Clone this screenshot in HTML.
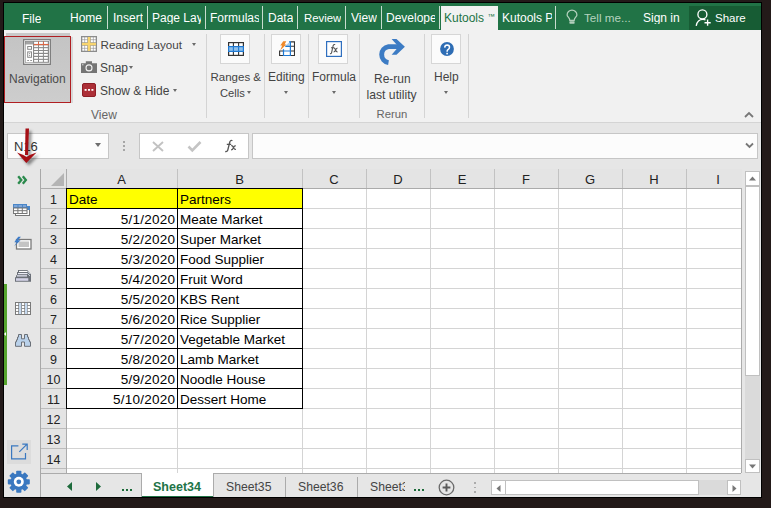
<!DOCTYPE html>
<html><head><meta charset="utf-8">
<style>
*{margin:0;padding:0;box-sizing:border-box}
html,body{width:771px;height:508px;overflow:hidden;background:#231a19}
body{position:relative;font-family:"Liberation Sans",sans-serif}
.a{position:absolute}
.t{position:absolute;white-space:nowrap;line-height:1}
#win{position:absolute;left:3px;top:2px;width:759px;height:496px;background:#000}
#tabs{position:absolute;left:4px;top:3px;width:757px;height:27px;background:#217346}
.tab{position:absolute;top:12px;font-size:12px;color:#fff;white-space:nowrap;line-height:1;overflow:hidden}
.sep{position:absolute;top:6px;width:1px;height:23px;background:#c8dccf}
#ribbon{position:absolute;left:4px;top:30px;width:757px;height:93px;background:#f1f1f1;border-bottom:1px solid #d4d4d4}
.rt{position:absolute;font-size:12px;color:#444;white-space:nowrap;line-height:1}
.gl{position:absolute;font-size:12px;color:#666;white-space:nowrap;line-height:1}
.gsep{position:absolute;top:34px;width:1px;height:84px;background:#d4d4d4}
.ibox{position:absolute;width:30px;height:30px;background:#fbfbfb;border:1px solid #d6d6d6}
.dd{position:absolute;width:0;height:0;border-left:2.8px solid transparent;border-right:2.8px solid transparent;border-top:3px solid #6a6a6a}
#below{position:absolute;left:4px;top:123px;width:757px;height:374px;background:#e6e6e6}
.cell{position:absolute;font-size:13.5px;color:#000;white-space:nowrap;line-height:1}
.hdr{position:absolute;font-size:13px;color:#222;white-space:nowrap;line-height:1;text-align:center}
</style></head><body>
<div id="win"></div>
<div id="tabs">
  <div class="a" style="left:685px;top:3px;width:72px;height:24px;background:#175c34"></div>
</div>
<!-- tab labels -->
<div class="tab" style="left:22px;top:13px">File</div>
<div class="sep" style="left:107px"></div>
<div class="tab" style="left:70px;">Home</div>
<div class="tab" style="left:113px;">Insert</div>
<div class="sep" style="left:147px"></div>
<div class="tab" style="left:152px;width:49px">Page Layout</div>
<div class="sep" style="left:205px"></div>
<div class="tab" style="left:210px;width:49px">Formulas</div>
<div class="sep" style="left:262px"></div>
<div class="tab" style="left:268px;">Data</div>
<div class="sep" style="left:297px"></div>
<div class="tab" style="left:304px;font-size:11.4px;top:12.5px">Review</div>
<div class="sep" style="left:345px"></div>
<div class="tab" style="left:351px;">View</div>
<div class="sep" style="left:381px"></div>
<div class="tab" style="left:386px;width:49px">Developer</div>
<div class="a" style="left:441px;top:6px;width:57px;height:24px;background:#f1f1f1"></div>
<div class="a" style="left:439px;top:6px;width:1px;height:23px;background:#c8dccf"></div>
<div class="tab" style="left:444px;color:#217346">Kutools</div><div class="tab" style="left:487.5px;top:13px;color:#217346;font-size:7.5px">™</div>
<div class="tab" style="left:502px;width:50px">Kutools Plus</div>
<div class="sep" style="left:555px"></div>
<svg class="a" style="left:566px;top:9px" width="12" height="15" viewBox="0 0 12 15"><path d="M3.8 11.3C3.8 8.8 1.1 7.8 1.1 5.9A4.9 4.8 0 0 1 10.9 5.9C10.9 7.8 8.2 8.8 8.2 11.3Z" fill="none" stroke="#b3d0bd" stroke-width="1.25"/><rect x="3.4" y="12.2" width="5.2" height="2.5" rx="0.6" fill="#b3d0bd"/></svg>
<div class="tab" style="left:584px;color:#b5d2bf;font-size:11.7px">Tell me...</div>
<div class="tab" style="left:643px;">Sign in</div>
<svg class="a" style="left:695px;top:8px" width="17" height="19" viewBox="0 0 17 19"><circle cx="7.4" cy="6.4" r="4.5" fill="none" stroke="#fff" stroke-width="1.35"/><path d="M1.2 17.8C2 13.6 4.8 11.4 8 11.4C9 11.4 9.8 11.6 10.5 12" fill="none" stroke="#fff" stroke-width="1.35"/><path d="M12.6 11.6V17.8M9.5 14.7H15.7" stroke="#fff" stroke-width="1.35"/></svg>
<div class="tab" style="left:715px;font-size:11.5px;top:12.5px">Share</div>

<div id="ribbon"></div>
<!-- Navigation button -->
<div class="a" style="left:6px;top:33px;width:64px;height:4px;background:#c9c9c9"></div>
<div class="a" style="left:70px;top:37px;width:3px;height:66px;background:#d8d8d8"></div>
<div class="a" style="left:4px;top:36px;width:67px;height:67px;border:1px solid #b01e22;background:linear-gradient(#c4c4c4,#cdcdcd)"></div>
<svg class="a" style="left:23px;top:39px" width="28" height="26" viewBox="0 0 28 26">
 <rect x="0.65" y="0.65" width="26.7" height="24.7" fill="#fff" stroke="#7f7f7f" stroke-width="1.3"/>
 <rect x="2" y="2" width="24" height="21.8" fill="#8a8a8a"/>
 <rect x="2.6" y="2.4" width="7.4" height="3" fill="#a3a3a3"/>
 <rect x="2.6" y="5.4" width="7.4" height="17.9" fill="#fff"/>
 <rect x="4.7" y="7.5" width="3.8" height="2.8" fill="none" stroke="#8a8a8a"/>
 <rect x="4.7" y="12.9" width="3.8" height="5.4" fill="none" stroke="#8a8a8a"/>
 <circle cx="6.6" cy="14.6" r="0.6" fill="#8a8a8a"/><circle cx="6.6" cy="16.6" r="0.6" fill="#8a8a8a"/>
 <rect x="4.2" y="21" width="1.8" height="0.9" fill="#8a8a8a"/><rect x="7.2" y="21" width="1.8" height="0.9" fill="#8a8a8a"/>
 <g fill="#fff"><rect x="11.1" y="2.8" width="3.9" height="2.1"/><rect x="11.1" y="6.3" width="3.9" height="1.8"/><rect x="11.1" y="9.2" width="3.9" height="1.8"/><rect x="11.1" y="12.0" width="3.9" height="1.8"/><rect x="11.1" y="15.0" width="3.9" height="1.8"/><rect x="11.1" y="18.0" width="3.9" height="1.8"/><rect x="11.1" y="20.9" width="3.9" height="1.9"/><rect x="16.0" y="2.8" width="3.9" height="2.1"/><rect x="16.0" y="6.3" width="3.9" height="1.8"/><rect x="16.0" y="9.2" width="3.9" height="1.8"/><rect x="16.0" y="12.0" width="3.9" height="1.8"/><rect x="16.0" y="15.0" width="3.9" height="1.8"/><rect x="16.0" y="18.0" width="3.9" height="1.8"/><rect x="16.0" y="20.9" width="3.9" height="1.9"/><rect x="20.9" y="2.8" width="3.9" height="2.1"/><rect x="20.9" y="6.3" width="3.9" height="1.8"/><rect x="20.9" y="9.2" width="3.9" height="1.8"/><rect x="20.9" y="12.0" width="3.9" height="1.8"/><rect x="20.9" y="15.0" width="3.9" height="1.8"/><rect x="20.9" y="18.0" width="3.9" height="1.8"/><rect x="20.9" y="20.9" width="3.9" height="1.9"/></g>
 <rect x="10.6" y="5.1" width="15.3" height="1" fill="#e5623c"/><rect x="15.1" y="2.4" width="0.8" height="3" fill="#e5623c"/><rect x="20.0" y="2.4" width="0.8" height="3" fill="#e5623c"/>
</svg>
<div class="rt" style="left:9px;top:73px;color:#4a4a4a">Navigation</div>

<!-- Reading layout etc -->
<svg class="a" style="left:81px;top:36px" width="16" height="16" viewBox="0 0 16 16">
 <rect x="0" y="0" width="16" height="16" fill="#8c8c8c"/>
 <g fill="#fff"><rect x="1.3" y="1.3" width="2.2" height="2.2"/><rect x="1.3" y="4.1" width="2.2" height="2.2"/><rect x="1.3" y="9.7" width="2.2" height="2.2"/><rect x="1.3" y="12.5" width="2.2" height="2.2"/><rect x="4.1" y="1.3" width="2.2" height="2.2"/><rect x="4.1" y="4.1" width="2.2" height="2.2"/><rect x="4.1" y="9.7" width="2.2" height="2.2"/><rect x="4.1" y="12.5" width="2.2" height="2.2"/><rect x="9.7" y="1.3" width="2.2" height="2.2"/><rect x="9.7" y="4.1" width="2.2" height="2.2"/><rect x="9.7" y="9.7" width="2.2" height="2.2"/><rect x="9.7" y="12.5" width="2.2" height="2.2"/><rect x="12.5" y="1.3" width="2.2" height="2.2"/><rect x="12.5" y="4.1" width="2.2" height="2.2"/><rect x="12.5" y="9.7" width="2.2" height="2.2"/><rect x="12.5" y="12.5" width="2.2" height="2.2"/></g>
 <rect x="6.8" y="1" width="2.5" height="14" fill="#f8d56e"/><rect x="1" y="6.8" width="14" height="2.5" fill="#f8d56e"/>
</svg>
<div class="rt" style="left:100.5px;top:39.3px;font-size:11.65px">Reading Layout</div>
<div class="dd" style="left:192px;top:43px"></div>
<svg class="a" style="left:81px;top:61px" width="16" height="12" viewBox="0 0 16 12">
 <path d="M0 2.3H4.8V0.3H11V2.3H16V12H0Z" fill="#757575"/>
 <circle cx="8" cy="6.9" r="3" fill="none" stroke="#f1f1f1" stroke-width="1.1"/>
 <rect x="1.2" y="3.2" width="1.2" height="1.1" fill="#e8e8e8"/>
</svg>
<div class="rt" style="left:100px;top:62px">Snap</div>
<div class="dd" style="left:129px;top:66px"></div>
<svg class="a" style="left:82px;top:83px" width="14" height="14" viewBox="0 0 14 14">
 <rect x="0.5" y="0.5" width="13" height="13" rx="1.5" fill="#ac2f37" stroke="#8e1e26"/>
 <rect x="2.6" y="6" width="2" height="1.8" fill="#fff"/><rect x="6" y="6" width="2" height="1.8" fill="#fff"/><rect x="9.4" y="6" width="2" height="1.8" fill="#fff"/>
</svg>
<div class="rt" style="left:100px;top:85px">Show &amp; Hide</div>
<div class="dd" style="left:173px;top:89px"></div>
<div class="gl" style="left:91px;top:109px">View</div>
<div class="gsep" style="left:206px"></div>

<!-- Ranges & Cells -->
<div class="ibox" style="left:220px;top:34px"></div>
<svg class="a" style="left:228px;top:42px" width="16" height="14" viewBox="0 0 16 14">
 <rect x="0.6" y="0.6" width="14.8" height="12.8" fill="#fff" stroke="#333" stroke-width="1.2"/>
 <path d="M5.4 0v14M10.6 0v14" stroke="#333" stroke-width="1.1"/>
 <rect x="0.6" y="4.6" width="14.8" height="4.8" fill="#8fc0ea" stroke="#1f78d1" stroke-width="1.2"/>
 <path d="M5.4 5v4M10.6 5v4" stroke="#1f78d1" stroke-width="1.1"/>
</svg>
<div class="rt" style="left:210.5px;top:71.5px;font-size:11.5px">Ranges &amp;</div>
<div class="rt" style="left:220px;top:87.5px;font-size:11.2px">Cells</div>
<div class="dd" style="left:247px;top:91px"></div>
<div class="gsep" style="left:264px"></div>

<!-- Editing -->
<div class="ibox" style="left:271px;top:34px"></div>
<svg class="a" style="left:279px;top:41px" width="16" height="15" viewBox="0 0 16 15">
 <rect x="4.5" y="1" width="11" height="13.5" fill="#fff"/><rect x="0.5" y="10" width="4" height="4.5" fill="#fff"/>
 <path d="M11.4 0.9H15.5V14.6H11.4M11.4 5.3H15.5M11.4 10H15.5M4.5 10H0.6V14.6H4.5" fill="none" stroke="#333" stroke-width="1.1"/>
 <path d="M6 5L10.6 0.9V5Z" fill="#a9cdee"/>
 <path d="M4.5 8.3V14.6H11.4V0.9H10M6.3 5.3H11.4M4.5 10H11.4" fill="none" stroke="#1f78d1" stroke-width="1.2"/>
 <path d="M4.2 0.3H7.3L5.6 3.4H7.4L1.2 9.3L3.2 4.6H1.3Z" fill="#f0892a"/>
</svg>
<div class="rt" style="left:268px;top:71px">Editing</div>
<div class="dd" style="left:283.8px;top:90.7px"></div>
<div class="gsep" style="left:308px"></div>

<!-- Formula -->
<div class="ibox" style="left:318px;top:34px"></div>
<svg class="a" style="left:326px;top:41px" width="16" height="16" viewBox="0 0 16 16">
 <rect x="0.6" y="0.6" width="14.8" height="14.8" fill="#fff" stroke="#2f6fbf" stroke-width="1.2"/>
 <g transform="translate(-1 0)"><path d="M10.2 3.6Q8.4 3 8 5.2L6.6 11.6Q6.2 13 5 12.6M6 6.7H9.2" fill="none" stroke="#555" stroke-width="1.1"/>
 <path d="M8.8 7Q10 7 10.6 9Q11.2 11 12.6 11M12.5 7Q11.4 7.3 10.6 9Q9.8 11 8.6 11" fill="none" stroke="#555" stroke-width="1.1"/></g>
</svg>
<div class="rt" style="left:312px;top:71px">Formula</div>
<div class="dd" style="left:332px;top:90.7px"></div>
<div class="gsep" style="left:359px"></div>

<!-- Rerun -->
<svg class="a" style="left:376px;top:36px" width="32" height="32" viewBox="0 0 32 32">
 <path d="M12.5 26.6A8.1 8.1 0 0 1 12.5 10.6H23" fill="none" stroke="#3d7cc4" stroke-width="4.9"/>
 <path d="M15.6 3.1H20.5L28.9 10.8L20.5 18.8H15.6L22.6 10.8Z" fill="#3d7cc4"/>
</svg>
<div class="rt" style="left:374px;top:73px">Re-run</div>
<div class="rt" style="left:366.5px;top:89px;font-size:12.2px">last utility</div>
<div class="gl" style="left:376.5px;top:109px;font-size:11.3px">Rerun</div>
<div class="gsep" style="left:424px"></div>

<!-- Help -->
<div class="ibox" style="left:431px;top:34px"></div>
<svg class="a" style="left:440px;top:42px" width="14" height="14" viewBox="0 0 14 14">
 <circle cx="7" cy="7" r="6.9" fill="#2e6db4"/>
 <path d="M4.7 5.6Q4.9 3.1 7.2 3.1Q9.5 3.2 9.5 5.3Q9.4 6.9 8 7.7Q7.1 8.3 7.1 9.8" fill="none" stroke="#fff" stroke-width="1.5"/><rect x="6.3" y="10.8" width="1.6" height="1.6" fill="#fff"/>
</svg>
<div class="rt" style="left:434px;top:71px">Help</div>
<div class="dd" style="left:444px;top:90.7px"></div>
<div class="gsep" style="left:468px"></div>

<svg class="a" style="left:744px;top:111px" width="10" height="7" viewBox="0 0 10 7"><path d="M1 6L5 2L9 6" fill="none" stroke="#777" stroke-width="1.8"/></svg>

<!-- below ribbon -->
<div id="below"></div>
<!-- name box -->
<div class="a" style="left:7px;top:133px;width:102px;height:26px;background:#fcfcfc;border:1px solid #c6c6c6"></div>
<div class="t" style="left:14px;top:140px;font-size:13px;color:#333">N16</div>
<div class="dd" style="left:94.8px;top:143px;border-left-width:3.7px;border-right-width:3.7px;border-top-width:4.2px;border-top-color:#6e6e6e"></div>
<div class="a" style="left:123px;top:141px;width:2px;height:2px;background:#a6a6a6"></div>
<div class="a" style="left:123px;top:145px;width:2px;height:2px;background:#a6a6a6"></div>
<div class="a" style="left:123px;top:149px;width:2px;height:2px;background:#a6a6a6"></div>
<div class="a" style="left:139px;top:133px;width:110px;height:26px;background:#fff;border:1px solid #c6c6c6"></div>
<svg class="a" style="left:152px;top:141px" width="12" height="11" viewBox="0 0 12 11"><path d="M1 1L11 10M11 1L1 10" stroke="#c2c2c2" stroke-width="1.9"/></svg>
<svg class="a" style="left:187px;top:140px" width="15" height="13" viewBox="0 0 15 13"><path d="M1.5 6.5L5.3 10.3L13.5 2" fill="none" stroke="#c4c4c4" stroke-width="2.6"/></svg>
<svg class="a" style="left:222px;top:138px" width="16" height="16" viewBox="0 0 16 16">
 <path d="M10.4 2.8Q8.7 1.6 7.8 4L5.7 12.3Q5.1 14 3.2 13.5M4.8 6.4H9.2" fill="none" stroke="#555" stroke-width="1.35"/>
 <path d="M9.2 7.6Q10.6 7.2 11.5 9.5Q12.4 11.8 13.9 11.4M13.7 7.6Q12.1 8 11.5 9.5Q10.8 11.8 9.1 11.8" fill="none" stroke="#555" stroke-width="1.2"/>
</svg>
<div class="a" style="left:252px;top:133px;width:506px;height:26px;background:#fcfcfc;border:1px solid #c6c6c6"></div>
<svg class="a" style="left:745px;top:142px" width="9" height="7" viewBox="0 0 9 7"><path d="M1 1.5L4.5 5L8 1.5" fill="none" stroke="#777" stroke-width="1.8"/></svg>

<!-- red arrow -->
<svg class="a" style="left:14px;top:126px" width="30" height="44" viewBox="0 0 30 44">
 <defs><filter id="sh" x="-50%" y="-50%" width="200%" height="200%"><feGaussianBlur stdDeviation="1.6"/></filter></defs>
 <g transform="translate(2.5 2.5)" filter="url(#sh)" fill="#000" fill-opacity="0.45">
  <path d="M11.5 2.5L15 2.5L14 29L11 29Z"/>
  <path d="M3 26.5Q9 28.5 12.5 31Q16 28.5 22.5 26.5L12.3 37Z"/>
 </g>
 <path d="M11.5 2.5L15 2.5L14 29L11 29Z" fill="#a50f15"/>
 <path d="M3 26.5Q9 28.5 12.5 31Q16 28.5 22.5 26.5L12.3 37Z" fill="#a50f15"/>
</svg>

<!-- left pane icons -->
<svg class="a" style="left:17px;top:175px" width="11" height="10" viewBox="0 0 11 10"><path d="M1.2 1.2L4.3 5L1.2 8.8M5.8 1.2L8.9 5L5.8 8.8" fill="none" stroke="#2a8a4c" stroke-width="2.3"/></svg>
<svg class="a" style="left:13px;top:204px" width="17" height="12" viewBox="0 0 17 12">
 <rect x="2.5" y="2.5" width="14" height="9" fill="#fff" stroke="#777"/>
 <rect x="14" y="2" width="3" height="4" fill="#4a86c8"/>
 <rect x="0" y="0" width="14" height="4" fill="#4a86c8"/>
 <rect x="1" y="1" width="3.5" height="2" fill="#7ea6d8"/><rect x="5.5" y="1" width="3.5" height="2" fill="#7ea6d8"/><rect x="10" y="1" width="3" height="2" fill="#7ea6d8"/>
 <rect x="0.5" y="4" width="13.5" height="5.5" fill="#fff" stroke="#777"/>
 <path d="M0 6.7h14M4.9 4v6M9.3 4v6" stroke="#777"/>
</svg>
<svg class="a" style="left:13px;top:236px" width="19" height="14" viewBox="0 0 19 14">
 <rect x="3.5" y="3.5" width="14.5" height="9.5" fill="#fff" stroke="#7a7a7a" stroke-width="1.3"/>
 <rect x="5.5" y="5.5" width="10.5" height="5.5" fill="#c4c4c4"/>
 <path d="M5.2 0.8L1.3 6.2h2.6L1 10.6L7.6 4.2H5.1L7.9 0.8z" fill="#3d7cc9"/>
</svg>
<svg class="a" style="left:15px;top:270px" width="17" height="12" viewBox="0 0 17 12">
 <path d="M3 0H12.2L16 4.2V11.7H0V7.3H1V5.3H2V2.1H3Z" fill="#6b7078"/>
 <rect x="4" y="0.9" width="8" height="1.1" fill="#fff"/>
 <rect x="3" y="3" width="9" height="1.2" fill="#e9eaf4"/>
 <rect x="2" y="5.2" width="10" height="1.3" fill="#dfe0ee"/>
 <rect x="1" y="8.2" width="12.3" height="2.6" fill="#d3d2e6"/>
 <path d="M12.3 1L15.2 4M12.3 3.2L15 6" stroke="#e4ecf8" stroke-width="0.8"/>
</svg>
<svg class="a" style="left:15px;top:302px" width="16" height="13" viewBox="0 0 16 13">
 <rect x="0" y="0" width="16" height="13" fill="#7a7a7a"/>
 <g fill="#fff">
  <rect x="1" y="1" width="2.3" height="2.2"/><rect x="1" y="4" width="2.3" height="2.2"/><rect x="1" y="7" width="2.3" height="2.2"/><rect x="1" y="10" width="2.3" height="2"/>
  <rect x="7" y="1" width="2.3" height="2.2"/><rect x="7" y="4" width="2.3" height="2.2"/><rect x="7" y="7" width="2.3" height="2.2"/><rect x="7" y="10" width="2.3" height="2"/>
  <rect x="12.7" y="1" width="2.3" height="2.2"/><rect x="12.7" y="4" width="2.3" height="2.2"/><rect x="12.7" y="7" width="2.3" height="2.2"/><rect x="12.7" y="10" width="2.3" height="2"/>
 </g>
 <rect x="4" y="1" width="2.3" height="11" fill="#c5d9ef"/><rect x="10" y="1" width="2.2" height="11" fill="#c5d9ef"/>
</svg>
<svg class="a" style="left:14.5px;top:333.5px" width="16" height="13" viewBox="-0.5 -0.5 16 13">
 <path d="M3 0H6V4.3H9V0H12V2.6H13V5.3H14V7.3H15V11.8H9V7.5H6V11.8H0V7.3H1V5.3H2V2.6H3Z" fill="#b9d1ea" stroke="#6b7078" stroke-width="1"/>
</svg>
<div class="a" style="left:4px;top:284px;width:3px;height:101px;background:#56a42e"></div>
<div class="a" style="left:4px;top:331.5px;width:0;height:0;border-top:2.7px solid transparent;border-bottom:2.7px solid transparent;border-right:2.6px solid #fff"></div>
<div class="a" style="left:7px;top:440px;width:24px;height:24px;background:#dcdcdc"></div>
<svg class="a" style="left:10px;top:442px" width="19" height="19" viewBox="0 0 19 19">
 <path d="M8.4 3.8H1.6V16.9H15.5V11" fill="none" stroke="#3a78c0" stroke-width="1.2"/>
 <path d="M9.3 9.9L17.3 1.9M12.3 2.2H17.2V8" fill="none" stroke="#3a78c0" stroke-width="1.2"/>
</svg>
<svg class="a" style="left:7px;top:470px" width="24" height="24" viewBox="0 0 24 24">
 <g transform="translate(11.8 11.8)" fill="#3a78c0">
  <circle r="8.3"/><rect x="-2.6" y="-11" width="5.2" height="5" rx="0.8" transform="rotate(0)"/><rect x="-2.6" y="-11" width="5.2" height="5" rx="0.8" transform="rotate(45)"/><rect x="-2.6" y="-11" width="5.2" height="5" rx="0.8" transform="rotate(90)"/><rect x="-2.6" y="-11" width="5.2" height="5" rx="0.8" transform="rotate(135)"/><rect x="-2.6" y="-11" width="5.2" height="5" rx="0.8" transform="rotate(180)"/><rect x="-2.6" y="-11" width="5.2" height="5" rx="0.8" transform="rotate(225)"/><rect x="-2.6" y="-11" width="5.2" height="5" rx="0.8" transform="rotate(270)"/><rect x="-2.6" y="-11" width="5.2" height="5" rx="0.8" transform="rotate(315)"/>
  <circle r="5" fill="#fff"/><circle r="2.4"/>
 </g>
</svg>

<!-- GRID -->
<div class="a" style="left:40px;top:169px;width:702px;height:20px;background:#e4e4e4"></div>
<div class="a" style="left:40px;top:169px;width:1px;height:328px;background:#a8a8a8"></div>
<div class="a" style="left:41px;top:189px;width:25px;height:284px;background:#e4e4e4"></div>
<div class="a" style="left:67px;top:189px;width:674px;height:285px;background:#fff"></div>
<svg class="a" style="left:51px;top:173px" width="13" height="13" viewBox="0 0 13 13"><path d="M13 0V13H0Z" fill="#b4b4b4"/></svg>
<div class="a" style="left:177px;top:169px;width:1px;height:19px;background:#c2c2c2"></div>
<div class="a" style="left:302px;top:169px;width:1px;height:19px;background:#c2c2c2"></div>
<div class="a" style="left:366px;top:169px;width:1px;height:19px;background:#c2c2c2"></div>
<div class="a" style="left:430px;top:169px;width:1px;height:19px;background:#c2c2c2"></div>
<div class="a" style="left:494px;top:169px;width:1px;height:19px;background:#c2c2c2"></div>
<div class="a" style="left:558px;top:169px;width:1px;height:19px;background:#c2c2c2"></div>
<div class="a" style="left:622px;top:169px;width:1px;height:19px;background:#c2c2c2"></div>
<div class="a" style="left:686px;top:169px;width:1px;height:19px;background:#c2c2c2"></div>
<div class="a" style="left:66px;top:169px;width:1px;height:304px;background:#ababab"></div>
<div class="a" style="left:41px;top:188px;width:700px;height:1px;background:#ababab"></div>
<div class="hdr" style="left:66px;width:111px;top:172.5px">A</div>
<div class="hdr" style="left:177px;width:125px;top:172.5px">B</div>
<div class="hdr" style="left:302px;width:64px;top:172.5px">C</div>
<div class="hdr" style="left:366px;width:64px;top:172.5px">D</div>
<div class="hdr" style="left:430px;width:64px;top:172.5px">E</div>
<div class="hdr" style="left:494px;width:64px;top:172.5px">F</div>
<div class="hdr" style="left:558px;width:64px;top:172.5px">G</div>
<div class="hdr" style="left:622px;width:64px;top:172.5px">H</div>
<div class="hdr" style="left:686px;width:64px;top:172.5px">I</div>
<div class="a" style="left:177px;top:189px;width:1px;height:284px;background:#d4d4d4"></div>
<div class="a" style="left:302px;top:189px;width:1px;height:284px;background:#d4d4d4"></div>
<div class="a" style="left:366px;top:189px;width:1px;height:284px;background:#d4d4d4"></div>
<div class="a" style="left:430px;top:189px;width:1px;height:284px;background:#d4d4d4"></div>
<div class="a" style="left:494px;top:189px;width:1px;height:284px;background:#d4d4d4"></div>
<div class="a" style="left:558px;top:189px;width:1px;height:284px;background:#d4d4d4"></div>
<div class="a" style="left:622px;top:189px;width:1px;height:284px;background:#d4d4d4"></div>
<div class="a" style="left:686px;top:189px;width:1px;height:284px;background:#d4d4d4"></div>
<div class="a" style="left:67px;top:208px;width:674px;height:1px;background:#d4d4d4"></div>
<div class="a" style="left:41px;top:208px;width:25px;height:1px;background:#bcbcbc"></div>
<div class="a" style="left:67px;top:228px;width:674px;height:1px;background:#d4d4d4"></div>
<div class="a" style="left:41px;top:228px;width:25px;height:1px;background:#bcbcbc"></div>
<div class="a" style="left:67px;top:248px;width:674px;height:1px;background:#d4d4d4"></div>
<div class="a" style="left:41px;top:248px;width:25px;height:1px;background:#bcbcbc"></div>
<div class="a" style="left:67px;top:268px;width:674px;height:1px;background:#d4d4d4"></div>
<div class="a" style="left:41px;top:268px;width:25px;height:1px;background:#bcbcbc"></div>
<div class="a" style="left:67px;top:288px;width:674px;height:1px;background:#d4d4d4"></div>
<div class="a" style="left:41px;top:288px;width:25px;height:1px;background:#bcbcbc"></div>
<div class="a" style="left:67px;top:308px;width:674px;height:1px;background:#d4d4d4"></div>
<div class="a" style="left:41px;top:308px;width:25px;height:1px;background:#bcbcbc"></div>
<div class="a" style="left:67px;top:328px;width:674px;height:1px;background:#d4d4d4"></div>
<div class="a" style="left:41px;top:328px;width:25px;height:1px;background:#bcbcbc"></div>
<div class="a" style="left:67px;top:348px;width:674px;height:1px;background:#d4d4d4"></div>
<div class="a" style="left:41px;top:348px;width:25px;height:1px;background:#bcbcbc"></div>
<div class="a" style="left:67px;top:368px;width:674px;height:1px;background:#d4d4d4"></div>
<div class="a" style="left:41px;top:368px;width:25px;height:1px;background:#bcbcbc"></div>
<div class="a" style="left:67px;top:388px;width:674px;height:1px;background:#d4d4d4"></div>
<div class="a" style="left:41px;top:388px;width:25px;height:1px;background:#bcbcbc"></div>
<div class="a" style="left:67px;top:408px;width:674px;height:1px;background:#d4d4d4"></div>
<div class="a" style="left:41px;top:408px;width:25px;height:1px;background:#bcbcbc"></div>
<div class="a" style="left:67px;top:428px;width:674px;height:1px;background:#d4d4d4"></div>
<div class="a" style="left:41px;top:428px;width:25px;height:1px;background:#bcbcbc"></div>
<div class="a" style="left:67px;top:448px;width:674px;height:1px;background:#d4d4d4"></div>
<div class="a" style="left:41px;top:448px;width:25px;height:1px;background:#bcbcbc"></div>
<div class="a" style="left:67px;top:468px;width:674px;height:1px;background:#d4d4d4"></div>
<div class="a" style="left:41px;top:468px;width:25px;height:1px;background:#bcbcbc"></div>
<div class="hdr" style="left:41px;width:25px;top:193.5px;font-size:12.5px">1</div>
<div class="hdr" style="left:41px;width:25px;top:213.5px;font-size:12.5px">2</div>
<div class="hdr" style="left:41px;width:25px;top:233.5px;font-size:12.5px">3</div>
<div class="hdr" style="left:41px;width:25px;top:253.5px;font-size:12.5px">4</div>
<div class="hdr" style="left:41px;width:25px;top:273.5px;font-size:12.5px">5</div>
<div class="hdr" style="left:41px;width:25px;top:293.5px;font-size:12.5px">6</div>
<div class="hdr" style="left:41px;width:25px;top:313.5px;font-size:12.5px">7</div>
<div class="hdr" style="left:41px;width:25px;top:333.5px;font-size:12.5px">8</div>
<div class="hdr" style="left:41px;width:25px;top:353.5px;font-size:12.5px">9</div>
<div class="hdr" style="left:41px;width:25px;top:373.5px;font-size:12.5px">10</div>
<div class="hdr" style="left:41px;width:25px;top:393.5px;font-size:12.5px">11</div>
<div class="hdr" style="left:41px;width:25px;top:413.5px;font-size:12.5px">12</div>
<div class="hdr" style="left:41px;width:25px;top:433.5px;font-size:12.5px">13</div>
<div class="hdr" style="left:41px;width:25px;top:453.5px;font-size:12.5px">14</div>
<div class="a" style="left:741px;top:188px;width:1px;height:285px;background:#ababab"></div>
<div class="a" style="left:67px;top:189px;width:235px;height:19px;background:#ffff00"></div>
<div class="a" style="left:66px;top:188px;width:237px;height:1px;background:#000"></div>
<div class="a" style="left:66px;top:208px;width:237px;height:1px;background:#000"></div>
<div class="a" style="left:66px;top:228px;width:237px;height:1px;background:#000"></div>
<div class="a" style="left:66px;top:248px;width:237px;height:1px;background:#000"></div>
<div class="a" style="left:66px;top:268px;width:237px;height:1px;background:#000"></div>
<div class="a" style="left:66px;top:288px;width:237px;height:1px;background:#000"></div>
<div class="a" style="left:66px;top:308px;width:237px;height:1px;background:#000"></div>
<div class="a" style="left:66px;top:328px;width:237px;height:1px;background:#000"></div>
<div class="a" style="left:66px;top:348px;width:237px;height:1px;background:#000"></div>
<div class="a" style="left:66px;top:368px;width:237px;height:1px;background:#000"></div>
<div class="a" style="left:66px;top:388px;width:237px;height:1px;background:#000"></div>
<div class="a" style="left:66px;top:408px;width:237px;height:1px;background:#000"></div>
<div class="a" style="left:66px;top:188px;width:1px;height:221px;background:#000"></div>
<div class="a" style="left:177px;top:188px;width:1px;height:221px;background:#000"></div>
<div class="a" style="left:302px;top:188px;width:1px;height:221px;background:#000"></div>
<div class="cell" style="left:69px;top:193px">Date</div>
<div class="cell" style="left:180px;top:193px">Partners</div>
<div class="cell" style="right:595.7px;top:213px;letter-spacing:0.25px">5/1/2020</div>
<div class="cell" style="left:180px;top:213px">Meate Market</div>
<div class="cell" style="right:595.7px;top:233px;letter-spacing:0.25px">5/2/2020</div>
<div class="cell" style="left:180px;top:233px">Super Market</div>
<div class="cell" style="right:595.7px;top:253px;letter-spacing:0.25px">5/3/2020</div>
<div class="cell" style="left:180px;top:253px">Food Supplier</div>
<div class="cell" style="right:595.7px;top:273px;letter-spacing:0.25px">5/4/2020</div>
<div class="cell" style="left:180px;top:273px">Fruit Word</div>
<div class="cell" style="right:595.7px;top:293px;letter-spacing:0.25px">5/5/2020</div>
<div class="cell" style="left:180px;top:293px">KBS Rent</div>
<div class="cell" style="right:595.7px;top:313px;letter-spacing:0.25px">5/6/2020</div>
<div class="cell" style="left:180px;top:313px">Rice Supplier</div>
<div class="cell" style="right:595.7px;top:333px;letter-spacing:0.25px">5/7/2020</div>
<div class="cell" style="left:180px;top:333px">Vegetable Market</div>
<div class="cell" style="right:595.7px;top:353px;letter-spacing:0.25px">5/8/2020</div>
<div class="cell" style="left:180px;top:353px">Lamb Market</div>
<div class="cell" style="right:595.7px;top:373px;letter-spacing:0.25px">5/9/2020</div>
<div class="cell" style="left:180px;top:373px">Noodle House</div>
<div class="cell" style="right:595.7px;top:393px;letter-spacing:0.25px">5/10/2020</div>
<div class="cell" style="left:180px;top:393px">Dessert Home</div>
<div class="a" style="left:41px;top:473px;width:720px;height:24px;background:#e6e6e6"></div>
<div class="a" style="left:41px;top:473px;width:101px;height:1px;background:#ababab"></div>
<div class="a" style="left:213px;top:473px;width:528px;height:1px;background:#ababab"></div>
<svg class="a" style="left:67px;top:482px" width="6" height="9" viewBox="0 0 6 9"><path d="M5 0V9L0 4.5Z" fill="#1e6b3c"/></svg>
<svg class="a" style="left:96px;top:482px" width="6" height="9" viewBox="0 0 6 9"><path d="M0 0V9L5 4.5Z" fill="#1e6b3c"/></svg>
<div class="a" style="left:122px;top:488.5px;width:2.3px;height:2.3px;background:#1b6a38"></div>
<div class="a" style="left:126px;top:488.5px;width:2.3px;height:2.3px;background:#1b6a38"></div>
<div class="a" style="left:130px;top:488.5px;width:2.3px;height:2.3px;background:#1b6a38"></div>
<div class="a" style="left:141px;top:473px;width:73px;height:24px;background:#fff;border-bottom:1px solid #217346"></div>
<div class="a" style="left:141px;top:473px;width:1px;height:24px;background:#ababab"></div>
<div class="a" style="left:213px;top:473px;width:1px;height:24px;background:#ababab"></div>
<div class="t" style="left:153px;top:481px;font-size:12.5px;font-weight:bold;color:#217346">Sheet34</div>
<div class="t" style="left:226px;top:481px;font-size:12.2px;color:#444">Sheet35</div>
<div class="a" style="left:285px;top:477px;width:1px;height:20px;background:#ababab"></div>
<div class="t" style="left:298px;top:481px;font-size:12.2px;color:#444">Sheet36</div>
<div class="a" style="left:357px;top:477px;width:1px;height:20px;background:#ababab"></div>
<div class="t" style="left:370px;top:481px;font-size:12.2px;color:#444;width:35px;overflow:hidden">Sheet37</div>
<div class="a" style="left:414px;top:488.5px;width:2.3px;height:2.3px;background:#1b6a38"></div>
<div class="a" style="left:418px;top:488.5px;width:2.3px;height:2.3px;background:#1b6a38"></div>
<div class="a" style="left:422px;top:488.5px;width:2.3px;height:2.3px;background:#1b6a38"></div>
<svg class="a" style="left:437.5px;top:478.5px" width="17" height="17" viewBox="0 0 17 17"><circle cx="8.5" cy="8.5" r="7.3" fill="none" stroke="#6a6a6a" stroke-width="1.3"/><path d="M8.5 4.6v7.8M4.6 8.5h7.8" stroke="#5a5a5a" stroke-width="1.9"/></svg>
<div class="a" style="left:474px;top:482px;width:1.8px;height:1.8px;background:#ababab"></div>
<div class="a" style="left:474px;top:486.5px;width:1.8px;height:1.8px;background:#ababab"></div>
<div class="a" style="left:474px;top:491px;width:1.8px;height:1.8px;background:#ababab"></div>
<div class="a" style="left:491px;top:480px;width:250px;height:15px;background:#dadada"></div>
<div class="a" style="left:491px;top:480px;width:15px;height:15px;background:#fff;border:1px solid #c0c0c0"></div>
<svg class="a" style="left:495.5px;top:484.5px" width="5" height="7" viewBox="0 0 5 7"><path d="M4.5 0V7L0.5 3.5Z" fill="#777"/></svg>
<div class="a" style="left:505px;top:480px;width:194px;height:15px;background:#fff;border:1px solid #c0c0c0"></div>
<div class="a" style="left:727px;top:480px;width:14px;height:15px;background:#fff;border:1px solid #c0c0c0"></div>
<svg class="a" style="left:732px;top:484.5px" width="5" height="7" viewBox="0 0 5 7"><path d="M0.5 0V7L4.5 3.5Z" fill="#777"/></svg>
<div class="a" style="left:745px;top:171px;width:15px;height:302px;background:#dadada"></div>
<div class="a" style="left:745px;top:171px;width:15px;height:15px;background:#fff;border:1px solid #c0c0c0"></div>
<svg class="a" style="left:749px;top:176px" width="7" height="5" viewBox="0 0 7 5"><path d="M0 4.5H7L3.5 0.5Z" fill="#777"/></svg>
<div class="a" style="left:745px;top:186px;width:15px;height:190px;background:#fff;border:1px solid #c0c0c0"></div>
<div class="a" style="left:745px;top:459px;width:15px;height:14px;background:#fff;border:1px solid #c0c0c0"></div>
<svg class="a" style="left:749px;top:464px" width="7" height="5" viewBox="0 0 7 5"><path d="M0 0.5H7L3.5 4.5Z" fill="#777"/></svg>
<!-- /GRID -->
</body></html>
